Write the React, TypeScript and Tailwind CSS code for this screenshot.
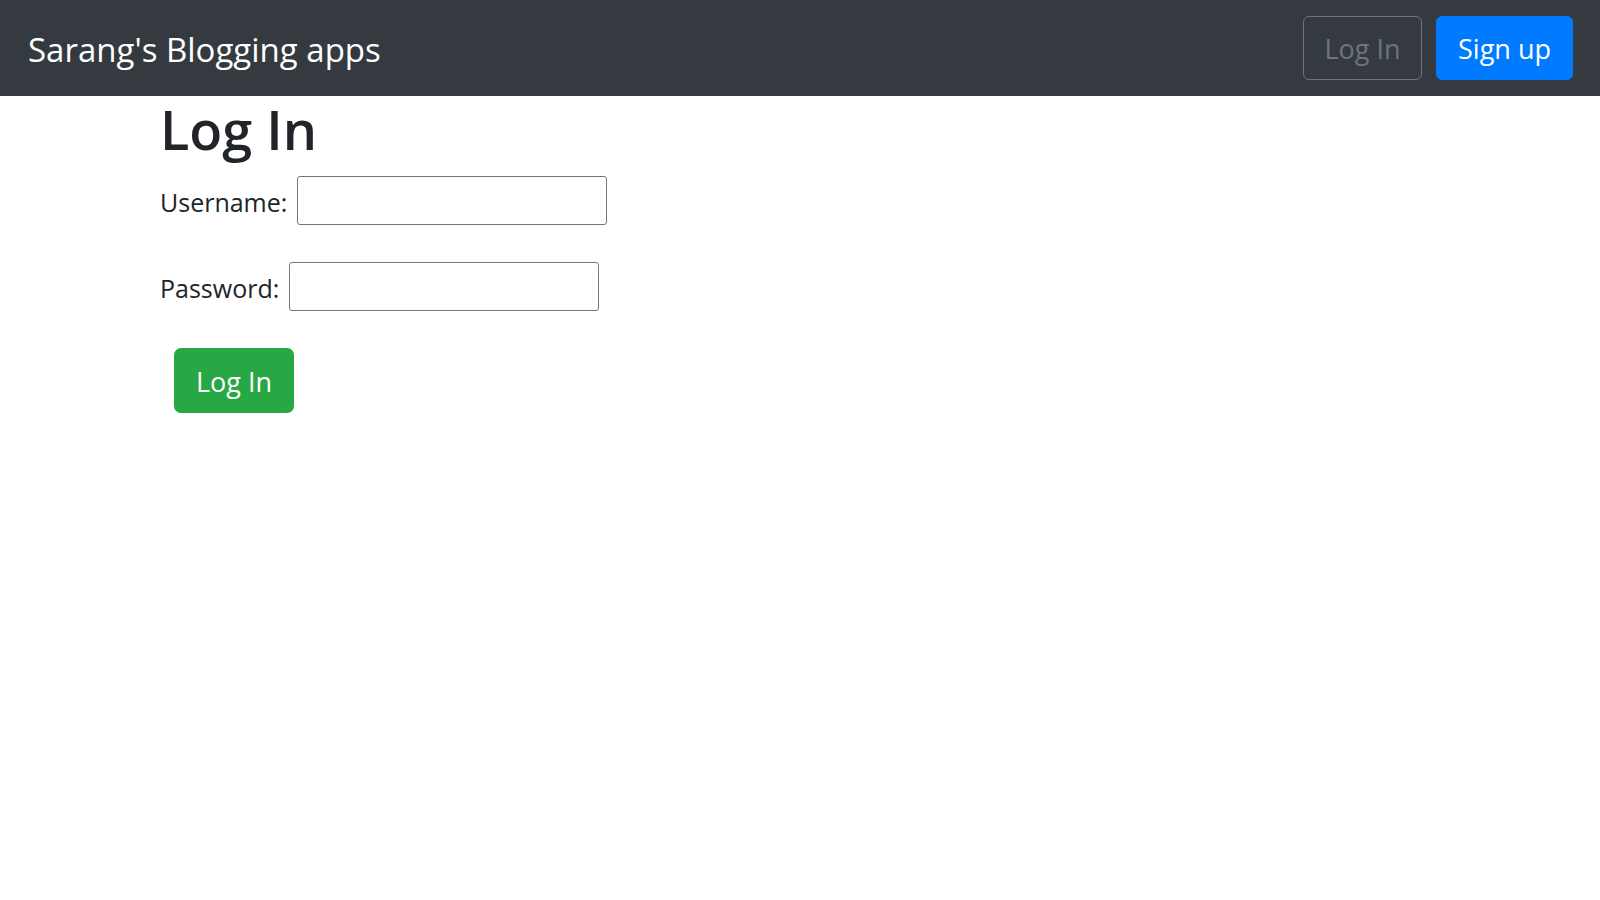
export default function App() {
  return (
    <div className="min-h-screen bg-white font-['Open_Sans','Noto_Sans',sans-serif] text-[#212529]">
      {/* Navbar */}
      <nav className="flex h-[96px] items-center justify-between bg-[#343a40] pl-[28px] pr-[27px]">
        <a href="#" className="pt-[2px] text-[33px] leading-none text-white">
          Sarang's Blogging apps
        </a>
        <div className="flex items-center gap-[14px]">
          <button className="h-[64px] w-[119px] rounded-[6px] border border-[#6c757d] pt-[3px] text-[27px] text-[#6c757d]">
            Log In
          </button>
          <button className="h-[64px] w-[137px] rounded-[6px] border border-[#007bff] bg-[#007bff] pt-[3px] text-[27px] text-white">
            Sign up
          </button>
        </div>
      </nav>

      {/* Login form */}
      <main className="pl-[160px]">
        <h1 className="pt-[1px] text-[54px] font-semibold leading-[1.2]">Log In</h1>
        <form className="flex flex-col items-start">
          <div className="mt-[14px] flex items-center gap-[10px]">
            <label className="pt-[4px] text-[25px]">Username:</label>
            <input
              type="text"
              className="h-[49px] w-[310px] rounded-[3px] border border-[#767676] px-2 text-[22px] outline-none"
            />
          </div>
          <div className="mt-[37px] flex items-center gap-[10px]">
            <label className="pt-[4px] text-[25px]">Password:</label>
            <input
              type="password"
              className="h-[49px] w-[310px] rounded-[3px] border border-[#767676] px-2 text-[22px] outline-none"
            />
          </div>
          <button
            type="button"
            className="ml-[14px] mt-[37px] h-[65px] w-[120px] rounded-[7px] bg-[#28a745] pt-[3px] text-[27px] text-white"
          >
            Log In
          </button>
        </form>
      </main>
    </div>
  )
}
